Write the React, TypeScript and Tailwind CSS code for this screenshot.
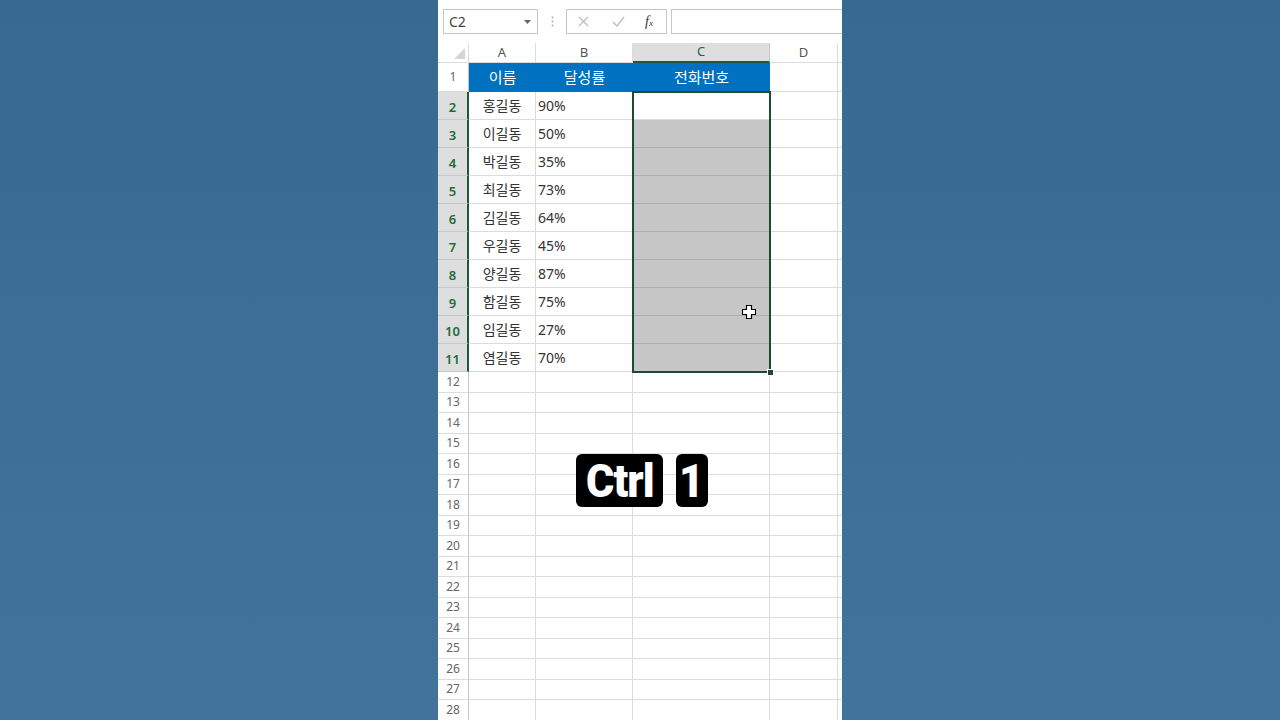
import React from "react";

const COLS = [67, 97, 137, 68, 40];
const font = { fontFamily: '"Noto Sans", "Noto Sans CJK KR", sans-serif' };

const data: [string, string][] = [
  ["홍길동", "90%"],
  ["이길동", "50%"],
  ["박길동", "35%"],
  ["최길동", "73%"],
  ["김길동", "64%"],
  ["우길동", "45%"],
  ["양길동", "87%"],
  ["함길동", "75%"],
  ["임길동", "27%"],
  ["염길동", "70%"],
];

function RowHead({ n, sel, h }: { n: number; sel?: boolean; h: string }) {
  return (
    <div
      className={
        "w-[31px] shrink-0 flex justify-center border-b " +
        h +
        (sel
          ? " bg-[#dedede] border-[#c8c8c8] border-r-2 border-r-[#1e5a37] text-[#1e6b3c] font-semibold items-end pb-[2px] text-[13px]"
          : " bg-white border-[#dcdcdc] border-r border-r-[#c4c4c4] text-[#666] items-center text-[12px]")
      }
    >
      {n}
    </div>
  );
}

export default function App() {
  const emptyRows = Array.from({ length: 17 }, (_, i) => i + 12);
  return (
    <div className="w-[1280px] h-[720px] overflow-hidden bg-linear-to-b from-[#386990] to-[#42749b]" style={font}>
      <div className="relative ml-[438px] w-[404px] h-[720px] bg-white overflow-hidden">
        {/* toolbar */}
        <div className="h-[43px] flex items-start pt-[9px] pl-[5px]">
          <div className="shrink-0 w-[95px] h-[25px] border border-[#c6c6c6] flex items-center justify-between pl-[5px] pr-[6px]">
            <span className="text-[14px] text-[#444]">C2</span>
            <svg width="7" height="4" viewBox="0 0 7 4"><path d="M0 0h7L3.5 4z" fill="#666" /></svg>
          </div>
          <div className="shrink-0 w-[28px] h-[25px] flex items-center justify-center">
            <svg width="3" height="11" viewBox="0 0 3 11">
              <circle cx="1.5" cy="1.5" r="1" fill="#aaa" />
              <circle cx="1.5" cy="5.5" r="1" fill="#aaa" />
              <circle cx="1.5" cy="9.5" r="1" fill="#aaa" />
            </svg>
          </div>
          <div className="shrink-0 w-[101px] h-[25px] border border-[#c6c6c6] flex items-center pl-[11px]">
            <svg width="11" height="11" viewBox="0 0 11 11"><path d="M1 1l9 9M10 1l-9 9" stroke="#bdbdbd" strokeWidth="1.3" /></svg>
            <svg className="ml-[23px]" width="13" height="11" viewBox="0 0 13 11"><path d="M1 6l4 4 7-9" stroke="#bdbdbd" strokeWidth="1.4" fill="none" /></svg>
            <span className="ml-[20px] text-[14px] italic text-[#333]" style={{ fontFamily: '"Liberation Serif", serif' }}>
              f<span className="text-[9px]">x</span>
            </span>
          </div>
          <div className="shrink-0 ml-[4px] w-[200px] h-[25px] border border-[#c6c6c6]" />
        </div>

        {/* column header */}
        <div className="flex h-[20px] text-[13px] text-[#555]">
          <div className="w-[31px] shrink-0 border-r border-b border-[#dcdcdc] relative">
            <svg className="absolute right-[3px] bottom-[3px]" width="11" height="11" viewBox="0 0 11 11"><path d="M11 0v11H0z" fill="#d6d6d6" /></svg>
          </div>
          {["A", "B", "C", "D", ""].map((c, i) => (
            <div
              key={i}
              style={{ width: COLS[i] }}
              className={
                "shrink-0 flex items-center justify-center border-r border-b " +
                (c === "C" ? "bg-[#dedede] border-[#c8c8c8] border-b-2 border-b-[#1e5a37] text-[#2d5e40]" : "border-[#dcdcdc]")
              }
            >
              {c}
            </div>
          ))}
        </div>

        {/* row 1 */}
        <div className="flex h-[29px]">
          <RowHead n={1} h="h-[29px]" />
          {["이름", "달성률", "전화번호"].map((t, i) => (
            <div
              key={i}
              style={{ width: COLS[i] }}
              className="shrink-0 bg-[#0070c0] text-white text-[15px] flex items-center justify-center"
            >
              {t}
            </div>
          ))}
          <div style={{ width: COLS[3] }} className="shrink-0 border-r border-b border-[#dcdcdc]" />
          <div style={{ width: COLS[4] }} className="shrink-0 border-b border-[#dcdcdc]" />
        </div>

        {/* rows 2-11 */}
        {data.map(([name, pct], i) => (
          <div key={i} className="flex h-[28px] text-[14px] text-[#333]">
            <RowHead n={i + 2} sel h="h-[28px]" />
            <div style={{ width: COLS[0] }} className="shrink-0 flex items-center justify-center border-r border-b border-[#dcdcdc]">
              {name}
            </div>
            <div style={{ width: COLS[1] }} className="shrink-0 flex items-center pl-[2px] border-r border-b border-[#dcdcdc]">
              {pct}
            </div>
            <div
              style={{ width: COLS[2] }}
              className={"shrink-0 border-r border-b " + (i === 0 ? "bg-white border-[#dcdcdc]" : "bg-[#c6c6c6] border-[#adadad]")}
            />
            <div style={{ width: COLS[3] }} className="shrink-0 border-r border-b border-[#dcdcdc]" />
            <div style={{ width: COLS[4] }} className="shrink-0 border-b border-[#dcdcdc]" />
          </div>
        ))}

        {/* rows 12-28 */}
        {emptyRows.map((n) => (
          <div key={n} className="flex h-[20.5px]">
            <RowHead n={n} h="h-[20.5px]" />
            {COLS.map((w, i) => (
              <div key={i} style={{ width: w }} className={"shrink-0 border-b border-[#dcdcdc] " + (i < 4 ? "border-r" : "")} />
            ))}
          </div>
        ))}

        {/* selection outline */}
        <div className="absolute left-[194px] top-[91px] w-[139px] h-[282px] border-2 border-[#1e4a31]" />
        <div className="absolute left-[329px] top-[369px] w-[7px] h-[7px] bg-[#1e4a31] border border-white" />

        {/* cursor */}
        <svg className="absolute left-[304px] top-[305px]" width="14" height="14" viewBox="0 0 14 14">
          <path d="M4.5 0.5h5v4h4v5h-4v4h-5v-4h-4v-5h4z" fill="white" stroke="black" strokeWidth="1.2" />
        </svg>

        {/* Ctrl + 1 overlay */}
        <div className="absolute left-[138px] top-[454px] flex gap-[13px]">
          <div className="w-[87px] h-[53px] rounded-[6px] bg-black flex items-center justify-center">
            <span className="text-white text-[47px] font-black leading-none tracking-[-1px] scale-x-[0.92] inline-block" style={{ fontFamily: "Roboto, sans-serif" }}>
              Ctrl
            </span>
          </div>
          <div className="w-[32px] h-[53px] rounded-[6px] bg-black flex items-center justify-center">
            <span className="text-white text-[47px] font-black leading-none scale-x-[0.92] inline-block" style={{ fontFamily: "Roboto, sans-serif" }}>
              1
            </span>
          </div>
        </div>
      </div>
    </div>
  );
}
